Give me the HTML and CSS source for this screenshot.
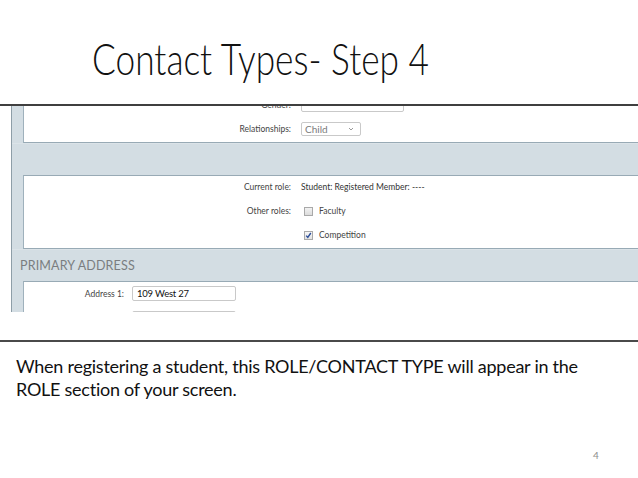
FILE: index.html
```html
<!DOCTYPE html>
<html lang="en">
<head>
<meta charset="utf-8">
<title>Contact Types- Step 4</title>
<link rel="stylesheet" href="styles.css">
</head>
<body>
<div class="slide">
  <header class="head">
    <h1 class="title">Contact Types- Step 4</h1>
  </header>
  <div class="rule"></div>
  <div class="shot">
    <div class="gutter"></div>
    <div class="frame">
      <section class="panel p1">
        <div class="form form-wide first">
          <span class="lbl">Gender:</span>
          <span class="input w103"></span>
          <span class="lbl">Relationships:</span>
          <span class="select">Child<svg class="arrow" width="6" height="4" viewBox="0 0 6 4"><path d="M1 1 L3 3 L5 1" fill="none" stroke="#9a9a9a" stroke-width="1"/></svg></span>
        </div>
      </section>
      <div class="band"></div>
      <section class="panel p2">
        <div class="form form-wide roles">
          <span class="lbl">Current role:</span>
          <span class="val">Student: Registered Member: ----</span>
          <span class="lbl">Other roles:</span>
          <span class="check"><span class="box"></span>Faculty</span>
          <span class="lbl"></span>
          <span class="check"><span class="box checked"><svg width="7" height="7" viewBox="0 0 7 7"><path d="M1.2 3.6 L2.8 5.4 L5.8 1" fill="none" stroke="#2d4f9a" stroke-width="1.4"/></svg></span>Competition</span>
        </div>
      </section>
      <div class="band band-head"><h2 class="section-title">PRIMARY ADDRESS</h2></div>
      <section class="panel p3">
        <div class="form form-addr">
          <span class="lbl">Address 1:</span>
          <span class="input w104 filled">109 West 27</span>
          <span class="lbl"></span>
          <span class="input w104"></span>
        </div>
      </section>
    </div>
  </div>
  <div class="rule rule-low"></div>
  <p class="caption">When registering a student, this ROLE/CONTACT TYPE will appear in the<br>ROLE section of your screen.</p>
  <div class="pagenum">4</div>
</div>
</body>
</html>
```
FILE: styles.css
```css
* { box-sizing: border-box; }
html, body { margin: 0; padding: 0; background: #fff; }
.slide {
  width: 638px;
  height: 478px;
  overflow: hidden;
  background: #fff;
  font-family: Lato, "Liberation Sans", sans-serif;
}
.head { height: 104px; padding: 37px 0 0 92px; }
.title {
  margin: 0;
  font-family: Lato, "Liberation Sans", sans-serif;
  font-weight: 300;
  font-size: 43px;
  line-height: 43px;
  color: #111;
  white-space: nowrap;
  transform: scaleX(0.82);
  transform-origin: left center;
}
.rule { height: 2px; background: #3f3f3f; }
.shot {
  height: 206px;
  display: flex;
  overflow: hidden;
}
.gutter { width: 11px; flex: none; background: #fff; }
.frame {
  flex: 1;
  display: flex;
  flex-direction: column;
  background: #d3dde3;
  border-left: 1px solid #8e9ea8;
}
.panel {
  margin-left: 11px;
  background: #fff;
  border-left: 1px solid #9fb1bc;
  overflow: hidden;
}
.p1 { height: 37px; border-bottom: 1px solid #98aab5; }
.band { height: 32px; flex: none; border-top: 1px solid #dbe3e8; }
.p2 { height: 74px; border-top: 1px solid #98aab5; border-bottom: 1px solid #98aab5; padding-top: 5px; }
.p3 { flex: 1; border-top: 1px solid #98aab5; padding-top: 4px; }
.band-head { display: flex; align-items: center; padding-left: 8px; }
.section-title {
  margin: 0;
  font-size: 12.5px;
  font-weight: 400;
  color: #7a7d80;
  letter-spacing: 0.15px;
}
.form {
  display: grid;
  align-items: center;
  font-size: 8.5px;
  color: #333;
}
.form-wide { grid-template-columns: 267px auto; column-gap: 10px; justify-content: start; }
.first { margin-top: -8px; grid-auto-rows: 14px; row-gap: 10px; }
.roles { grid-auto-rows: 12px; row-gap: 12px; }
.form-addr { grid-template-columns: 100px auto; column-gap: 8px; grid-auto-rows: 15px; row-gap: 10px; justify-content: start; }
.lbl { text-align: right; color: #444; white-space: nowrap; }
.val { color: #333; white-space: nowrap; }
.input {
  display: block;
  height: 100%;
  border: 1px solid #c9c9c9;
  border-radius: 2px;
  background: #fff;
}
.w103 { width: 103px; }
.w104 { width: 104px; }
.filled { font-size: 9.5px; color: #111; padding-left: 4px; line-height: 13px; letter-spacing: -0.2px; }
.select {
  display: flex;
  align-items: center;
  justify-content: space-between;
  width: 60px;
  height: 100%;
  padding: 0 6px 0 3px;
  border: 1px solid #c9c9c9;
  border-radius: 2px;
  font-size: 10px;
  color: #7b7b7b;
}
.check { display: flex; align-items: center; gap: 6px; color: #444; white-space: nowrap; }
.box {
  width: 9px;
  height: 9px;
  margin-left: 3px;
  border: 1px solid #a9a9a9;
  background: linear-gradient(#f2f2f2, #dcdcdc);
  display: flex;
  align-items: center;
  justify-content: center;
}
.box.checked { background: linear-gradient(#f7f7f7, #e2e2e2); }
.rule-low { margin-top: 28px; height: 2px; background: #4a4a4a; }
.caption {
  margin: 13px 0 0 16px;
  font-family: Lato, "Liberation Sans", sans-serif;
  font-size: 18px;
  line-height: 23px;
  letter-spacing: -0.25px;
  color: #111;
  white-space: nowrap;
}
.pagenum {
  margin-top: 48px;
  padding-left: 593px;
  font-size: 10px;
  line-height: 12px;
  color: #8c8c8c;
}
```
